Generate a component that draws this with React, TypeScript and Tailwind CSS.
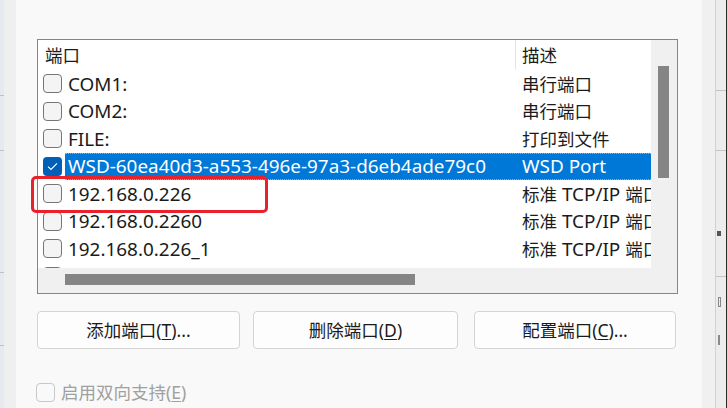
import React from 'react';

type Port = { name: string; desc: string; checked?: boolean; selected?: boolean };

const ports: Port[] = [
  { name: 'COM1:', desc: '串行端口' },
  { name: 'COM2:', desc: '串行端口' },
  { name: 'FILE:', desc: '打印到文件' },
  { name: 'WSD-60ea40d3-a553-496e-97a3-d6eb4ade79c0', desc: 'WSD Port', checked: true, selected: true },
  { name: '192.168.0.226', desc: '标准 TCP/IP 端口' },
  { name: '192.168.0.2260', desc: '标准 TCP/IP 端口' },
  { name: '192.168.0.226_1', desc: '标准 TCP/IP 端口' },
  { name: '192.168.0.227', desc: '标准 TCP/IP 端口' },
];

// CJK glyphs sit a bit smaller than the latin ones in the original UI font
const Mixed = ({ text }: { text: string }) => (
  <>
    {text.split(/([\u4e00-\u9fff]+)/).map((part, i) =>
      /[\u4e00-\u9fff]/.test(part) ? (
        <span key={i} className="text-[17.5px]">
          {part}
        </span>
      ) : (
        <span key={i}>{part}</span>
      )
    )}
  </>
);

const CheckBox = ({ checked, disabled }: { checked?: boolean; disabled?: boolean }) => {
  if (checked) {
    return (
      <span className="flex h-[19px] w-[19px] shrink-0 items-center justify-center rounded-[4px] bg-[#005fb8]">
        <svg width="11" height="9" viewBox="0 0 11 9" fill="none">
          <path d="M1 4.6 L4 7.4 L10 1.4" stroke="#fff" strokeWidth="1.2" />
        </svg>
      </span>
    );
  }
  return (
    <span
      className={`block h-[19px] w-[19px] shrink-0 rounded-[4px] border ${
        disabled ? 'border-[#c8c8c8] bg-[#f9f9f9]' : 'border-[#767676] bg-[#f4f4f4]'
      }`}
    />
  );
};

const Btn = ({ label, keyChar, tail, className }: { label: string; keyChar: string; tail: string; className: string }) => (
  <button
    className={`flex h-[38px] items-center justify-center rounded-[4px] border border-[#d4d4d4] bg-[#fdfdfd] text-[17.5px] text-[#1b1b1b] ${className}`}
  >
    {label}(<span className="underline underline-offset-2">{keyChar}</span>){tail}
  </button>
);

export default function App() {
  return (
    <div
      className="relative flex h-[408px] w-[727px] overflow-hidden bg-[#f9f9f9]"
      style={{ fontFamily: '"Noto Sans", "Noto Sans CJK SC", sans-serif' }}
    >
      {/* left edge of the window behind */}
      <div className="flex h-full w-[16px] shrink-0">
        <div className="flex w-[4px] flex-col bg-[#e6eaef]">
          <div className="mt-[95px] h-px bg-[#bcc2c8]" />
          <div className="mt-[54px] h-px bg-[#bcc2c8]" />
          <div className="mt-[121px] h-px bg-[#bcc2c8]" />
          <div className="mt-[72px] h-px bg-[#bcc2c8]" />
        </div>
        <div className="flex-1 bg-[#efefef]" />
      </div>

      {/* dialog body */}
      <div className="flex flex-1 flex-col pl-[21px] pr-[24px] pt-[39px]">
        {/* list view */}
        <div className="flex h-[255px] w-[641px] flex-col border border-[#858585] bg-white">
          <div className="flex h-[228px]">
            <div className="relative w-[613px] overflow-hidden">
              <div className="flex h-[30px] items-center text-[17.5px] text-[#1b1b1b]">
                <div className="w-[477px] pl-[7px]">端口</div>
                <div className="h-full w-px bg-[#e5e5e5]" />
                <div className="pl-[6px]">描述</div>
              </div>
              {ports.map((p) => (
                <div key={p.name} className="flex h-[27.5px] items-center whitespace-nowrap text-[18.9px]">
                  <div className="pl-[5px] pr-[3px]">
                    <CheckBox checked={p.checked} />
                  </div>
                  <div
                    className={`flex h-full flex-1 items-center ${
                      p.selected ? 'border-y border-dotted border-[#e9a15a] bg-[#0078d7] text-white' : 'text-[#1b1b1b]'
                    }`}
                  >
                    <div className="w-[457px] pl-[3px]">{p.name}</div>
                    <div>
                      <Mixed text={p.desc} />
                    </div>
                  </div>
                </div>
              ))}
            </div>
            {/* vertical scrollbar */}
            <div className="w-[26px] bg-[#f0f0f0] pl-[7px] pt-[26px]">
              <div className="h-[112px] w-[11px] bg-[#858585]" />
            </div>
          </div>
          {/* horizontal scrollbar */}
          <div className="flex h-[25px] items-start bg-[#f0f0f0] pl-[27px] pt-[6px]">
            <div className="h-[11px] w-[350px] bg-[#858585]" />
          </div>
        </div>

        {/* buttons */}
        <div className="mt-[17px] flex w-[640px]">
          <Btn label="添加端口" keyChar="T" tail="..." className="w-[203px]" />
          <Btn label="删除端口" keyChar="D" tail="" className="ml-[13px] w-[205px]" />
          <Btn label="配置端口" keyChar="C" tail="..." className="ml-[16px] w-[202px]" />
        </div>

        <div className="ml-[-1px] mt-[30px] flex items-center gap-[6px] text-[17.5px] text-[#a0a0a0]">
          <CheckBox disabled />
          <span>
            启用双向支持(<span className="underline underline-offset-2">E</span>)
          </span>
        </div>
      </div>

      {/* right edge: window behind */}
      <div className="flex h-full w-[26px] shrink-0">
        <div className="w-[13px] bg-[#f0f0f0]" />
        <div className="w-px bg-[#c9d4e3]" />
        <div className="relative w-[10px] bg-[#ececec]">
          <div className="absolute left-0 top-[90px] h-px w-full bg-[#c4c4c4]" />
          <div className="absolute left-0 top-[150px] h-px w-full bg-[#c4c4c4]" />
          <div className="absolute left-[1px] top-[231px] h-[5px] w-[4px] bg-[#555]" />
          <div className="absolute left-0 top-[276px] h-px w-full bg-[#c4c4c4]" />
          <div className="absolute left-[2px] top-[297px] h-[10px] w-[3px] border border-[#888]" />
          <div className="absolute left-[2px] top-[335px] h-[10px] w-[2px] bg-[#8a8a8a]" />
        </div>
        <div className="w-[2px] bg-[#2b2b2b]" />
      </div>

      {/* red annotation box */}
      <div className="absolute left-[31px] top-[176px] h-[37px] w-[237px] rounded-[5px] border-[3px] border-[#e8212a]" />
    </div>
  );
}
